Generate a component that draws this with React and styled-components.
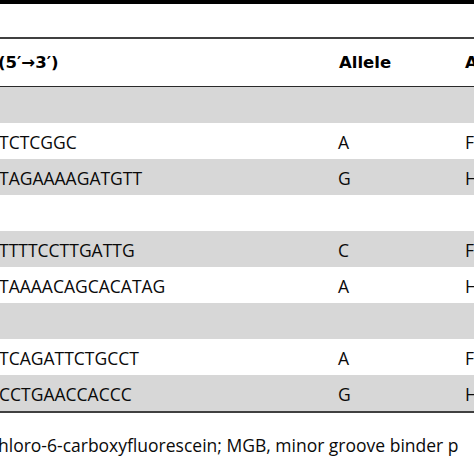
import styled, { createGlobalStyle } from 'styled-components';

const GlobalStyle = createGlobalStyle`
  html, body {
    margin: 0;
    padding: 0;
    background: #ffffff;
    overflow: hidden;
  }
  body {
    width: 474px;
    height: 474px;
  }
`;

const Page = styled.div`
  width: 474px;
  height: 474px;
  overflow: hidden;
  border-top: 4px solid #000000;
  box-sizing: border-box;
`;

const Caption = styled.div`
  height: 33px;
`;

const Table = styled.div`
  border-top: 2px solid #404040;
  border-bottom: 2px solid #404040;
`;

const HeaderRow = styled.div`
  display: grid;
  grid-template-columns: 339px 126px 1fr;
  align-items: center;
  height: 47px;
  border-bottom: 1.5px solid #2a2a2a;
  font-family: 'DejaVu Sans', sans-serif;
  font-weight: 700;
  font-size: 16.5px;
  color: #000000;
  white-space: nowrap;
`;

const Row = styled.div`
  display: grid;
  grid-template-columns: 338px 127px 1fr;
  align-items: center;
  height: 36px;
  padding-top: 2px;
  box-sizing: border-box;
  background: ${(p) => (p.$shaded ? '#d7d7d7' : '#ffffff')};
  font-family: 'Open Sans', sans-serif;
  font-size: 17.5px;
  color: #0a0a0a;
  white-space: nowrap;
`;

const Cell = styled.div`
  overflow: visible;
`;

const LeadCell = styled(Cell)`
  margin-left: ${(p) => p.$shift || 0}px;
`;

const Footnote = styled.p`
  margin: 20px 0 0 -2px;
  font-family: 'Open Sans', sans-serif;
  font-size: 17.5px;
  color: #0a0a0a;
  white-space: nowrap;
`;

const rows = [
  null,
  ['TCTCGGC', 'A', 'F'],
  ['TAGAAAAGATGTT', 'G', 'H'],
  null,
  ['TTTTCCTTGATTG', 'C', 'F'],
  ['TAAAACAGCACATAG', 'A', 'H'],
  null,
  ['TCAGATTCTGCCT', 'A', 'F'],
  ['CCTGAACCACCC', 'G', 'H'],
];

export default function App() {
  return (
    <>
      <GlobalStyle />
      <Page>
        <Caption />
        <Table>
          <HeaderRow>
            <LeadCell $shift={-2}>(5′→3′)</LeadCell>
            <Cell>Allele</Cell>
            <Cell>A</Cell>
          </HeaderRow>
          {rows.map((r, i) => (
            <Row key={i} $shaded={i % 2 === 0}>
              <LeadCell $shift={-1}>{r ? r[0] : ''}</LeadCell>
              <Cell>{r ? r[1] : ''}</Cell>
              <Cell>{r ? r[2] : ''}</Cell>
            </Row>
          ))}
        </Table>
        <Footnote>hloro-6-carboxyfluorescein; MGB, minor groove binder p</Footnote>
      </Page>
    </>
  );
}
